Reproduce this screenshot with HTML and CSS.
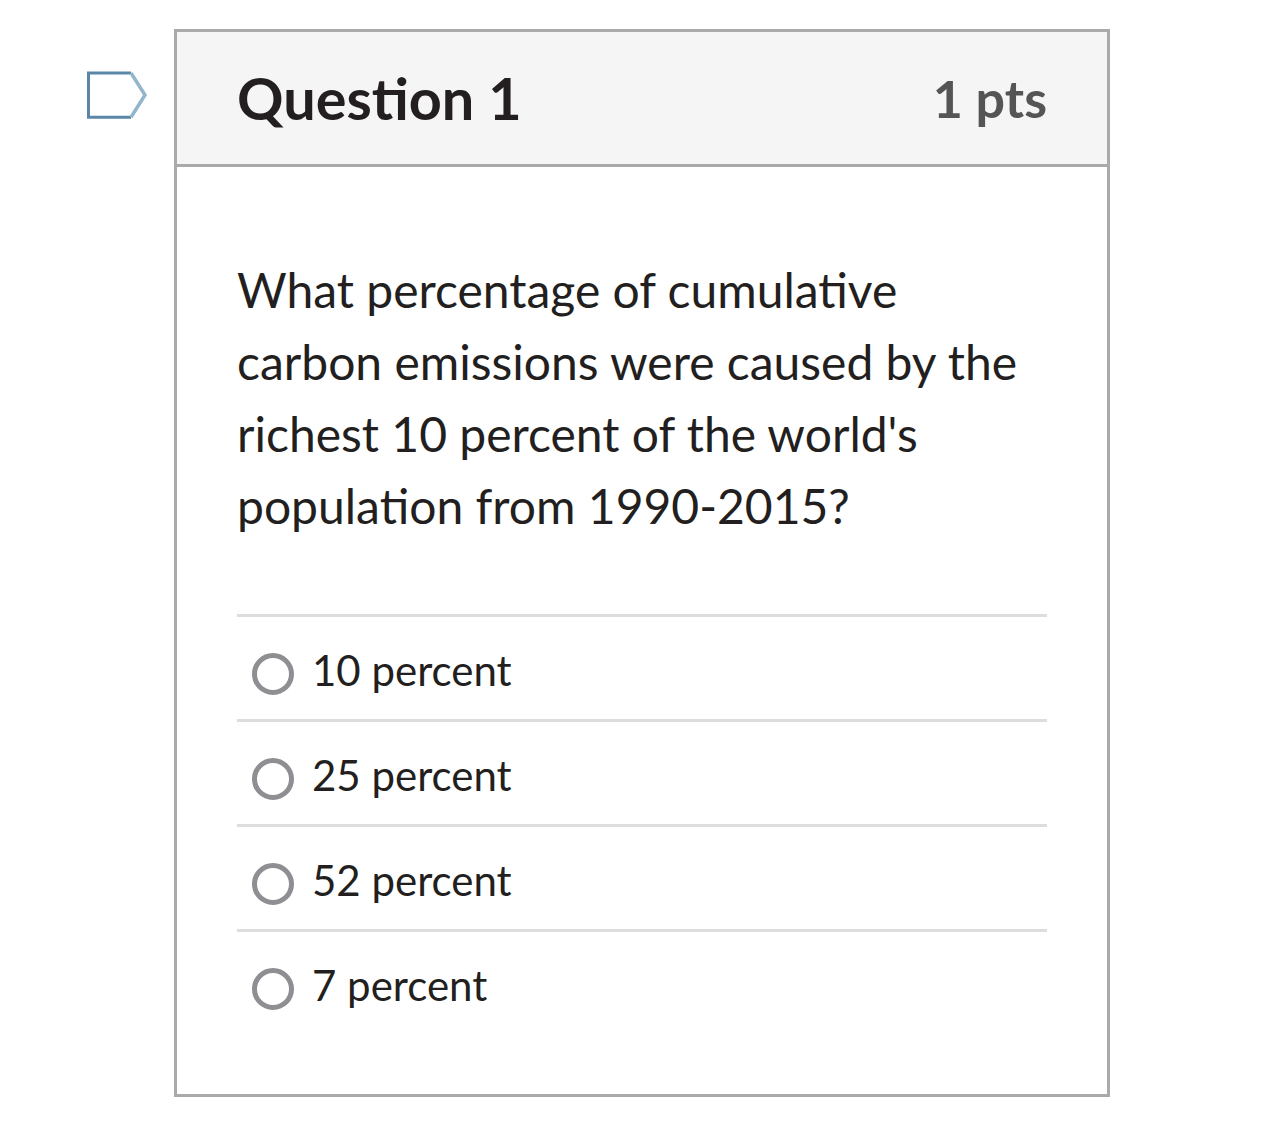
FILE: index.html
```html
<!DOCTYPE html>
<html lang="en">
<head>
<meta charset="utf-8">
<title>Question 1</title>
<link rel="stylesheet" href="styles.css">
</head>
<body>
<main class="layout">
  <svg class="flag" width="62" height="50" viewBox="0 0 62 50" aria-hidden="true">
    <path d="M45 3H2.500V47.300H45" fill="none" stroke="#5a87a8" stroke-width="3"/>
    <path d="M45 3L59 25L45 47.300" fill="none" stroke="#93b6cd" stroke-width="3.500"/>
  </svg>
  <section class="card">
    <header class="card-head">
      <h2 class="title">Question 1</h2>
      <span class="pts">1 pts</span>
    </header>
    <div class="card-body">
      <p class="question">What percentage of cumulative carbon emissions were caused by the richest 10 percent of the world's population from 1990-2015?</p>
      <ul class="answers">
        <li class="answer"><span class="radio"></span><span>10 percent</span></li>
        <li class="answer"><span class="radio"></span><span>25 percent</span></li>
        <li class="answer"><span class="radio"></span><span>52 percent</span></li>
        <li class="answer"><span class="radio"></span><span>7 percent</span></li>
      </ul>
    </div>
  </section>
</main>
</body>
</html>
```
FILE: styles.css
```css
* { box-sizing: border-box; }
html, body { margin: 0; background: #fff; }
body { font-family: Lato, sans-serif; color: #231f20; }
.layout { position: relative; padding: 29px 0 0 174px; width: 1284px; height: 1130px; }
.flag { position: absolute; left: 86px; top: 70px; }
.card { width: 936px; height: 1068px; border: 3px solid #aaa; }
.card-head { height: 135px; background: #f5f5f5; border-bottom: 3px solid #aaa; display: flex; justify-content: space-between; align-items: center; padding: 0 60px; }
.title { margin: 0 0 1px; font-size: 57.6px; font-weight: 700; color: #231f20; }
.pts { font-size: 52px; font-weight: 700; color: #555; }
.card-body { padding: 87px 60px 0; }
.question { margin: 0 0 72px; font-size: 48px; line-height: 72px; }
.answers { list-style: none; margin: 0; padding: 0; }
.answer { height: 105px; display: flex; align-items: center; gap: 18px; padding: 4px 0 0 15px; border-top: 3px solid #ddd; font-size: 42px; }
.radio { width: 42px; height: 42px; margin-top: 8px; border: 5px solid #8e8e93; border-radius: 50%; background: #fff; }
```
